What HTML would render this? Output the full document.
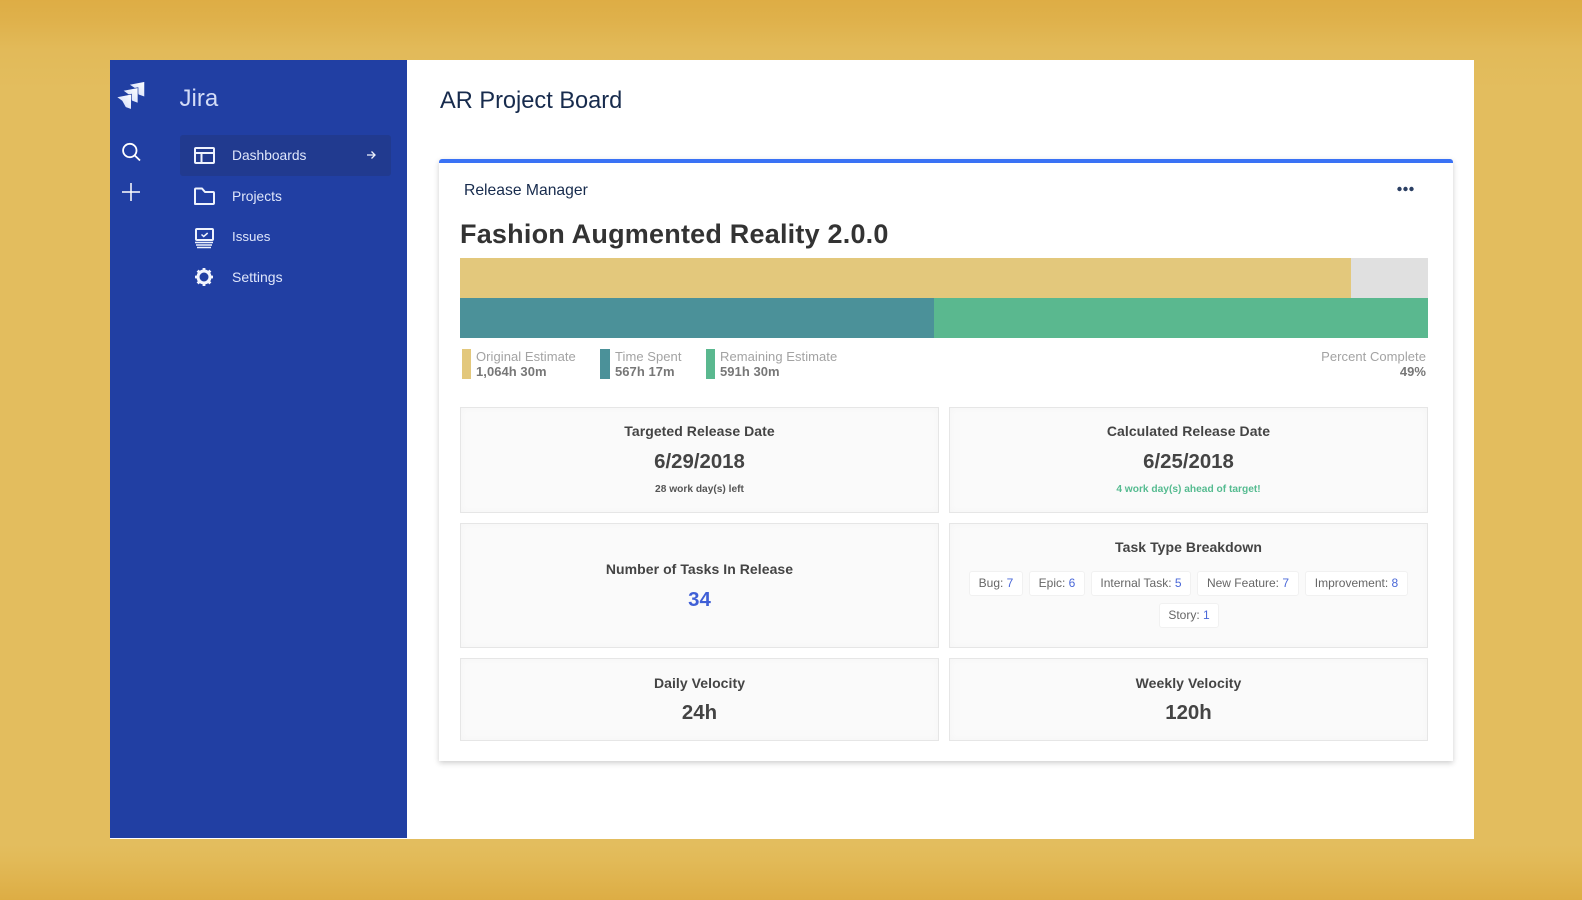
<!DOCTYPE html>
<html lang="en"><head><meta charset="utf-8"><title>AR Project Board</title>
<style>
*{box-sizing:border-box}
html,body{margin:0;padding:0;width:1582px;height:900px;overflow:hidden}
body{position:relative;font-family:"Liberation Sans",Arial,sans-serif;background:linear-gradient(180deg,#dead45 0,#dfb14b 20px,#e2ba59 50px,#e3bd5e 90px,#e3bd5e 845px,#e2ba58 860px,#dfb24c 885px,#ddad44 900px)}
#w{position:absolute;left:0;top:0;width:1582px;height:900px;filter:blur(.35px)}
.a{position:absolute}
.t{position:absolute;white-space:nowrap}
.c{text-align:center}
.win{left:110px;top:60px;width:1364px;height:779px;background:#fff}
.side{left:110px;top:60px;width:297px;height:778px;background:#213fa3}
.act{left:180px;top:135px;width:211px;height:41px;background:#213a8f;border-radius:3px}
.nav{left:232px;font-size:14px;line-height:20px;color:#dfe6fb}
.card{left:439px;top:159px;width:1014px;height:602px;background:#fff;border-top:4px solid #3a72f5;border-radius:3px 3px 0 0;box-shadow:0 2px 6px rgba(0,0,0,.2)}
.box{background:#fafafa;border:1px solid #e6e6e6;box-shadow:inset 0 0 8px rgba(0,0,0,.025)}
.lb{font-size:14px;font-weight:bold;color:#444;line-height:18px;letter-spacing:.06px}
.val{font-size:20.400px;font-weight:bold;color:#444;line-height:24px}
.lg{font-size:13px;line-height:15px;color:#a3a3a3;letter-spacing:.05px}
.lg b{display:block;color:#777}
.chip{background:#fff;border:1px solid #f1f1f1;border-radius:3px;font-size:12px;line-height:23px;color:#666;text-align:center;white-space:nowrap}
.chip i{font-style:normal;color:#4a68d8}
</style></head><body>
<div id="w">
<div class="a win"></div>
<div class="a side"></div>
<div class="a act"></div>

<svg class="a" style="left:110px;top:60px" width="297" height="260" viewBox="110 60 297 260" fill="none">
<defs><linearGradient id="g" x1="1" y1="0" x2="0" y2="1"><stop offset="0" stop-color="#fff"/><stop offset=".6" stop-color="#dfe6fb"/><stop offset="1" stop-color="#b9c9f5"/></linearGradient></defs>
<g fill="url(#g)" stroke="#213fa3" stroke-width=".7"><path d="M129 84.500 144.600 81.500 144.600 97 138.500 94.800 135 88.500Z"/><path d="M122.800 90.500 138 87.700 138 103.200 132 101 128.700 94.800Z"/><path d="M116.500 97 131.500 94.200 131.300 109.500 125.500 107.300 122 101Z"/></g>
<g stroke="#fff" stroke-width="1.800"><circle cx="129.800" cy="150.500" r="6.700"/><path d="M134.800 155.500 140 160.500"/><path d="M122 192H140M131 183V201" stroke-width="1.500"/></g>
<g stroke="#eef2fd" stroke-width="2">
<rect x="195" y="148" width="19" height="15" rx="1"/><path d="M195 153H214M201.500 153V163"/>
<path d="M195 204V189.500a1 1 0 0 1 1-1h6l3 3.500h8a1 1 0 0 1 1 1V203a1 1 0 0 1-1 1H196a1 1 0 0 1-1-1Z" stroke-linejoin="round"/>
<rect x="196" y="229" width="17" height="11" rx="1"/><path d="M195 242.500H213M196 245H212M197 247.500H211" stroke-width="1.500"/><path d="M201.500 234.500l2.200 2 4-3.500" stroke-width="1.500"/>
<path d="M367 155H375M371.500 151.500 375 155 371.500 158.500" stroke-width="1.300"/>
</g>
<circle cx="204" cy="277" r="6" stroke="#f2f5fe" stroke-width="3"/>
<g stroke="#f2f5fe" stroke-width="2.800"><path d="M204 268V271M204 283V286M195 277H198M210 277H213M197.600 270.600 199.800 272.800M208.200 281.200 210.400 283.400M197.600 283.400 199.800 281.200M208.200 272.800 210.400 270.600"/></g>
</svg>

<div class="t" style="left:179.500px;top:85px;font-size:24px;line-height:28px;color:#d3dcf7">Jira</div>
<div class="t nav" style="top:146px;font-size:13.800px">Dashboards</div>
<div class="t nav" style="top:187px;font-size:13.800px">Projects</div>
<div class="t nav" style="top:227px;font-size:13.300px">Issues</div>
<div class="t nav" style="top:267px">Settings</div>

<div class="t" style="left:440px;top:87px;font-size:23.600px;line-height:28px;color:#172b4d">AR Project Board</div>

<div class="a card"></div>
<div class="t" style="left:464px;top:182px;font-size:15.700px;line-height:18px;color:#172b4d">Release Manager</div>
<svg class="a" style="left:1396px;top:185px" width="20" height="8"><g fill="#2b3f63"><circle cx="3.500" cy="4" r="2.200"/><circle cx="9.500" cy="4" r="2.200"/><circle cx="15.500" cy="4" r="2.200"/></g></svg>
<div class="t" style="left:460px;top:218px;font-size:27px;font-weight:bold;letter-spacing:.21px;line-height:32px;color:#333">Fashion Augmented Reality 2.0.0</div>

<div class="a" style="left:460px;top:258px;width:968px;height:40px;background:#e0e0e0"></div>
<div class="a" style="left:460px;top:258px;width:891px;height:40px;background:#e3c87c"></div>
<div class="a" style="left:460px;top:298px;width:968px;height:40px;background:#5ab88f"></div>
<div class="a" style="left:460px;top:298px;width:474px;height:40px;background:#4b9199"></div>

<div class="a" style="left:462px;top:349px;width:9px;height:30px;background:#e3c87c"></div>
<div class="t lg" style="left:476px;top:349px">Original Estimate<b>1,064h 30m</b></div>
<div class="a" style="left:600px;top:349px;width:10px;height:30px;background:#4b9199"></div>
<div class="t lg" style="left:615px;top:349px">Time Spent<b>567h 17m</b></div>
<div class="a" style="left:706px;top:349px;width:9px;height:30px;background:#5ab88f"></div>
<div class="t lg" style="left:720px;top:349px">Remaining Estimate<b>591h 30m</b></div>
<div class="t lg" style="right:156px;top:349px;text-align:right">Percent Complete<b>49%</b></div>

<div class="a box" style="left:460px;top:407px;width:479px;height:106px"></div>
<div class="a box" style="left:949px;top:407px;width:479px;height:106px"></div>
<div class="a box" style="left:460px;top:523px;width:479px;height:125px"></div>
<div class="a box" style="left:949px;top:523px;width:479px;height:125px"></div>
<div class="a box" style="left:460px;top:658px;width:479px;height:83px"></div>
<div class="a box" style="left:949px;top:658px;width:479px;height:83px"></div>

<div class="t c lb" style="left:460px;width:479px;top:422px">Targeted Release Date</div>
<div class="t c val" style="left:460px;width:479px;top:450px">6/29/2018</div>
<div class="t c" style="left:460px;width:479px;top:484px;font-size:10.200px;font-weight:bold;line-height:12px;color:#555">28 work day(s) left</div>

<div class="t c lb" style="left:949px;width:479px;top:422px">Calculated Release Date</div>
<div class="t c val" style="left:949px;width:479px;top:450px">6/25/2018</div>
<div class="t c" style="left:949px;width:479px;top:484px;font-size:10.200px;font-weight:bold;line-height:12px;color:#55bb90">4 work day(s) ahead of target!</div>

<div class="t c lb" style="left:460px;width:479px;top:560px">Number of Tasks In Release</div>
<div class="t c val" style="left:460px;width:479px;top:588px;color:#3f5fd6">34</div>

<div class="t c lb" style="left:949px;width:479px;top:538px">Task Type Breakdown</div>
<div class="a chip" style="left:969px;top:571px;width:54px;height:25px"><span>Bug: <i>7</i></span></div>
<div class="a chip" style="left:1029px;top:571px;width:56px;height:25px">Epic: <i>6</i></div>
<div class="a chip" style="left:1091px;top:571px;width:100px;height:25px">Internal Task: <i>5</i></div>
<div class="a chip" style="left:1197px;top:571px;width:102px;height:25px">New Feature: <i>7</i></div>
<div class="a chip" style="left:1305px;top:571px;width:103px;height:25px">Improvement: <i>8</i></div>
<div class="a chip" style="left:1159px;top:603px;width:60px;height:25px">Story: <i>1</i></div>

<div class="t c lb" style="left:460px;width:479px;top:674px">Daily Velocity</div>
<div class="t c val" style="left:460px;width:479px;top:701px">24h</div>
<div class="t c lb" style="left:949px;width:479px;top:674px">Weekly Velocity</div>
<div class="t c val" style="left:949px;width:479px;top:701px">120h</div>
</div>
</body></html>
